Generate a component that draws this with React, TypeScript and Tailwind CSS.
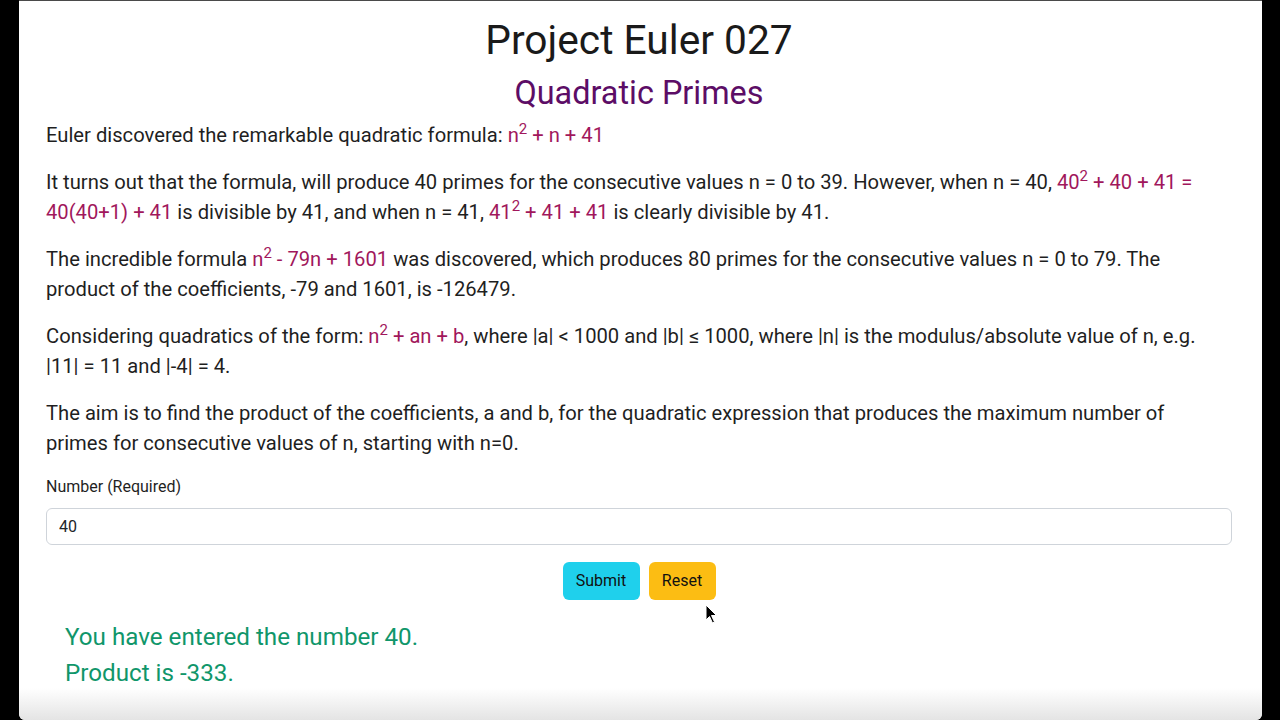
const Code = ({ children }: { children: React.ReactNode }) => (
  <span className="text-[#a1175c]">{children}</span>
);

const Sq = () => <sup className="text-[15px] -top-[8px]">2</sup>;

export default function App() {
  return (
    <div className="h-screen w-full bg-black flex pl-[19px] pr-[18px] overflow-hidden font-['Roboto',sans-serif]">
      <div className="relative flex-1 bg-white border-t border-[#4a4a4a] rounded-b-[6px] overflow-hidden">
        <div className="pl-[27px] pr-[30px] pt-[15px] text-[#212529]">
          <h2 className="text-[40.7px] leading-[48px] text-center text-[#1a1a1a]">Project Euler 027</h2>
          <h3 className="text-[32.4px] leading-[42px] text-center text-[#5c0d66] mt-[8px] mb-[6px]">
            Quadratic Primes
          </h3>
          <div className="text-[20.2px] leading-[30px] text-[#1f1f1f] mr-[20px]">
            <p className="mb-[17px]">
              Euler discovered the remarkable quadratic formula:{" "}
              <Code>
                n<Sq /> + n + 41
              </Code>
            </p>
            <p className="mb-[17px]">
              It turns out that the formula, will produce 40 primes for the consecutive values n = 0 to 39. However,
              when n = 40,{" "}
              <Code>
                40<Sq /> + 40 + 41 = 40(40+1) + 41
              </Code>{" "}
              is divisible by 41, and when n = 41,{" "}
              <Code>
                41<Sq /> + 41 + 41
              </Code>{" "}
              is clearly divisible by 41.
            </p>
            <p className="mb-[17px]">
              The incredible formula{" "}
              <Code>
                n<Sq /> - 79n + 1601
              </Code>{" "}
              was discovered, which produces 80 primes for the consecutive values n = 0 to 79. The product of the
              coefficients, -79 and 1601, is -126479.
            </p>
            <p className="mb-[17px]">
              Considering quadratics of the form:{" "}
              <Code>
                n<Sq /> + an + b
              </Code>
              , where |a| &lt; 1000 and |b| ≤ 1000, where |n| is the modulus/absolute value of n, e.g. |11| = 11 and
              |-4| = 4.
            </p>
            <p>
              The aim is to find the product of the coefficients, a and b, for the quadratic expression that produces
              the maximum number of primes for consecutive values of n, starting with n=0.
            </p>
          </div>

          <div className="mt-[17px]">
            <label className="block text-[16px] leading-[24px] text-[#1f1f1f]">Number (Required)</label>
            <input
              readOnly
              value="40"
              className="mt-[9px] w-full h-[37px] border border-[#cfd4da] rounded-[6px] px-[12px] text-[16px] text-[#212529] outline-none"
            />
          </div>

          <div className="flex justify-center gap-[9px] mt-[17px]">
            <button className="w-[77px] h-[38px] rounded-[6px] bg-[#1fd0ec] text-[16px] text-[#111]">Submit</button>
            <button className="w-[67px] h-[38px] rounded-[6px] bg-[#fcbd13] text-[16px] text-[#111]">Reset</button>
          </div>

          <div className="pl-[19px] mt-[19px] text-[24.2px] leading-[36px] text-[#10966a]">
            <p>You have entered the number 40.</p>
            <p>Product is -333.</p>
          </div>
        </div>

        <svg className="absolute left-[686px] top-[603px]" width="14" height="20" viewBox="0 0 14 20">
          <path d="M1 1 L1 16 L4.5 12.5 L7.5 19 L9.5 18 L6.5 11.5 L11.5 11.5 Z" fill="#000" stroke="#fff" strokeWidth="1" />
        </svg>

        <div className="absolute left-0 right-0 bottom-0 h-[32px] bg-gradient-to-b from-white/0 to-[#e4e4e4]" />
      </div>
    </div>
  );
}
